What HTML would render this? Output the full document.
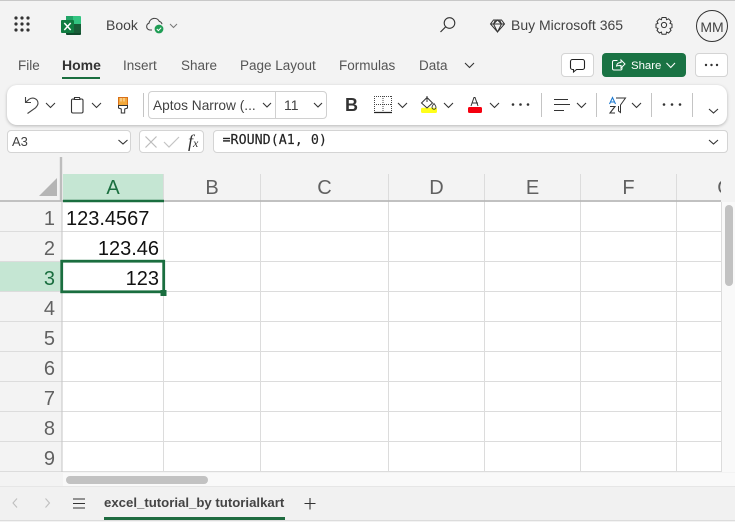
<!DOCTYPE html>
<html><head><meta charset="utf-8"><style>
html,body{margin:0;padding:0}
body{width:735px;height:522px;overflow:hidden;background:#f3f3f3;position:relative;font-family:"Liberation Sans",sans-serif;color:#424242}
div,span.t{position:absolute;box-sizing:border-box}
.t{white-space:nowrap;font-size:14px;line-height:18px}
.tab{font-size:13.5px;color:#555;top:57px}
.hd{top:174px;height:27px;font-size:20px;line-height:28px;text-align:center;color:#616161}
.rh{left:0;width:60px;height:30px;font-size:20px;line-height:34px;text-align:right;padding-right:5px;color:#616161}
.c{font-size:20px;line-height:34px;color:#111;height:30px}
.box{background:#fff;border:1px solid #d4d4d4;border-radius:4px}
svg{position:absolute;left:0;top:0}
</style></head><body>
<div style="left:0;top:0;width:735px;height:1px;background:#c8c8c8"></div>

<span class="t" style="left:106px;top:16px">Book</span>
<span class="t" style="left:511px;top:16px">Buy Microsoft 365</span>
<span class="t tab" style="left:18px">File</span>
<span class="t" style="left:62px;top:56px;font-weight:bold;color:#333">Home</span>
<span class="t tab" style="left:123px">Insert</span>
<span class="t tab" style="left:181px">Share</span>
<span class="t tab" style="left:240px">Page Layout</span>
<span class="t tab" style="left:339px">Formulas</span>
<span class="t tab" style="left:419px">Data</span>
<div style="left:62px;top:77px;width:38px;height:2px;background:#1a6e3f"></div>
<div style="left:696px;top:10px;width:32px;height:32px;border:1px solid #333;border-radius:50%;font-size:14px;line-height:32px;text-align:center;color:#444">MM</div>

<div class="box" style="left:561px;top:53px;width:33px;height:24px"></div>
<div style="left:602px;top:53px;width:84px;height:24px;background:#1a7344;border-radius:4px"></div>
<span class="t" style="left:631px;top:57px;font-size:11.4px;line-height:18px;color:#fff">Share</span>
<div class="box" style="left:695px;top:53px;width:33px;height:24px"></div>

<div style="left:7px;top:85px;width:720px;height:40px;background:#fff;border-radius:10px;box-shadow:0 1px 3px rgba(0,0,0,.25)"></div>
<div style="left:148px;top:91px;width:179px;height:28px;background:#fff;border:1px solid #d0d0d0;border-radius:4px"></div>
<div style="left:275px;top:92px;width:1px;height:26px;background:#d0d0d0"></div>
<span class="t" style="left:153px;top:97px;font-size:13.7px">Aptos Narrow (...</span>
<span class="t" style="left:284px;top:96px;font-size:14px">11</span>
<span class="t" style="left:345px;top:95px;font-size:18px;line-height:21px;font-weight:bold;color:#333">B</span>

<div class="box" style="left:7px;top:130px;width:124px;height:23px"></div>
<span class="t" style="left:12px;top:133px;font-size:13px">A3</span>
<div class="box" style="left:139px;top:130px;width:65px;height:23px"></div>
<div class="box" style="left:213px;top:130px;width:515px;height:23px"></div>
<span class="t" style="left:222.5px;top:132px;font-family:'DejaVu Sans Mono',monospace;font-size:13.35px;color:#222;-webkit-text-stroke:.15px #222">=ROUND(A1, 0)</span>
<span class="t" style="left:188px;top:132px;font-family:'Liberation Serif',serif;font-style:italic;font-size:18px;color:#333">f<span style="font-size:12px">x</span></span>

<!-- Grid -->
<div style="left:62px;top:202px;width:660px;height:270px;background:#fff"></div>
<div style="left:63px;top:174px;width:100px;height:26px;background:#c5e6d3"></div>
<div style="left:0;top:262px;width:60px;height:29px;background:#c5e6d3"></div>
<div class="hd" style="left:63px;width:100px;color:#1a6e3f">A</div>
<div class="hd" style="left:164px;width:96px">B</div>
<div class="hd" style="left:261px;width:127px">C</div>
<div class="hd" style="left:389px;width:95px">D</div>
<div class="hd" style="left:485px;width:95px">E</div>
<div class="hd" style="left:581px;width:95px">F</div>
<div style="left:677px;top:174px;width:44px;height:27px;overflow:hidden"><div class="hd" style="left:0;top:0;width:96px">G</div></div>
<div class="rh" style="top:202px">1</div>
<div class="rh" style="top:232px">2</div>
<div class="rh" style="top:262px;color:#1a6e3f">3</div>
<div class="rh" style="top:292px">4</div>
<div class="rh" style="top:322px">5</div>
<div class="rh" style="top:352px">6</div>
<div class="rh" style="top:382px">7</div>
<div class="rh" style="top:412px">8</div>
<div class="rh" style="top:442px">9</div>

<svg width="735" height="522" viewBox="0 0 735 522" fill="none">
 <!-- grid lines -->
 <g stroke="#dcdcdc" stroke-width="1">
  <path d="M0 231.5H721M0 261.5H721M0 291.5H721M0 321.5H721M0 351.5H721M0 381.5H721M0 411.5H721M0 441.5H721M0 471.5H721"/>
  <path d="M163.5 174V472M260.5 174V472M388.5 174V472M484.5 174V472M580.5 174V472M676.5 174V472"/>
  <path d="M721.5 202V472"/>
 </g>
 <path d="M0 201H721" stroke="#b4b4b4" stroke-width="2" opacity=".8"/>
 <path d="M61 157V201" stroke="#bdbdbd" stroke-width="2.4"/>
 <path d="M62 201V472" stroke="#c4c4c4" stroke-width="1"/>
 <path d="M63 201H164" stroke="#1a6e3f" stroke-width="2.4"/>
 <path d="M57 178V196H39Z" fill="#b5b5b5"/>
 <rect x="61.7" y="261.2" width="102" height="30.6" stroke="#1a6e3f" stroke-width="2.8"/>
 <rect x="160.5" y="290" width="6" height="6" fill="#1a6e3f"/>
 <rect x="722" y="202" width="13" height="270" fill="#f9f9f9"/>
 <rect x="725" y="205" width="8" height="81" rx="4" fill="#c2c2c2"/>
 <rect x="63" y="473" width="672" height="13" fill="#f9f9f9"/>
 <rect x="66" y="476" width="142" height="8" rx="4" fill="#c2c2c2"/>
 <rect x="0" y="486.5" width="735" height="34" fill="#f1f1f1"/>
 <path d="M0 486.5H735" stroke="#e6e6e6"/>
 <path d="M0 520.5H735" stroke="#dcdcdc"/>

 <!-- waffle -->
 <g fill="#333"><circle cx="16" cy="18" r="1.6"/><circle cx="22" cy="18" r="1.6"/><circle cx="28" cy="18" r="1.6"/><circle cx="16" cy="24" r="1.6"/><circle cx="22" cy="24" r="1.6"/><circle cx="28" cy="24" r="1.6"/><circle cx="16" cy="30" r="1.6"/><circle cx="22" cy="30" r="1.6"/><circle cx="28" cy="30" r="1.6"/></g>
 <!-- excel -->
 <path d="M66 16h7v8h-7z" fill="#21a366"/>
 <path d="M73 16h7a1 1 0 0 1 1 1v7h-8z" fill="#33c481"/>
 <path d="M66 24h7v9h-7z" fill="#107c41"/><path d="M73 24h8v9h-8z" fill="#185c37"/>
 <path d="M66 33h15v1a1 1 0 0 1-1 1H67a1 1 0 0 1-1-1z" fill="#0f4a2c"/>
 <rect x="61" y="20" width="13" height="13" rx="1" fill="#107c41"/>
 <path d="M64.3 23l6.4 7M70.7 23l-6.4 7" stroke="#fff" stroke-width="1.5"/>
 <!-- cloud -->
 <path d="M152 30h-2a3.5 3.5 0 0 1-1-6.8 5.5 5.5 0 0 1 10.4-1.700 3.500 3.500 0 0 1 2.600 2.700" stroke="#444" stroke-width="1.1"/>
 <circle cx="159" cy="29" r="4.4" fill="#1f9d55"/><path d="M156.8 29l1.6 1.6 2.8-2.9" stroke="#fff" stroke-width="1"/>
 <path d="M170 24l3.5 3.500 3.500-3.500" stroke="#777" stroke-width="1"/>
 <!-- search -->
 <circle cx="449.5" cy="23" r="5.3" stroke="#333" stroke-width="1.1"/><path d="M445.5 27l-5 5" stroke="#333" stroke-width="1.2"/>
 <!-- diamond -->
 <path d="M493.5 20h8l3 4-7 8-7-8zM490.5 24h14M493.5 24l4 8 4-8M495.5 20l-2 4 4-4 4 4-2-4" stroke="#333" stroke-width="1"/>
 <!-- gear -->
 <circle cx="664" cy="25" r="2.6" stroke="#333"/>
 <path d="M662 17.5h4l.6 2.200 2-.9 2.400 2.600-1 2 2 .7v3.600l-2 .7 1 2-2.400 2.600-2-.9-.6 2.200h-4l-.6-2.200-2 .9-2.400-2.600 1-2-2-.7v-3.600l2-.7-1-2 2.400-2.600 2 .9z" stroke="#333"/>
 <!-- tabs chevron -->
 <path d="M465 63l4.500 4.500 4.500-4.500" stroke="#333" stroke-width="1.1"/>
 <!-- comment -->
 <path d="M572.5 59.5h10a2 2 0 0 1 2 2v6a2 2 0 0 1-2 2h-6l-3 2.500v-2.500h-1a2 2 0 0 1-2-2v-6a2 2 0 0 1 2-2z" stroke="#222" stroke-width="1.1"/>
 <!-- share -->
 <g transform="translate(-2.5 0)">
 <path d="M620 60.5h-3.500a1.500 1.500 0 0 0-1.500 1.500v6.500a1.500 1.500 0 0 0 1.500 1.500h6.500a1.500 1.500 0 0 0 1.500-1.500V67" stroke="#fff"/>
 <path d="M619 66c.3-2.500 2-3.500 4.500-3.500V60l4 4-4 4v-2.500c-2 0-3.300 0-4.500.5z" stroke="#fff"/>
 </g>
 <path d="M666.5 63l4.250 4.500 4.250-4.500" stroke="#fff" stroke-width="1.1"/>
 <!-- dots -->
 <g fill="#333"><circle cx="706" cy="65" r="1.2"/><circle cx="711.5" cy="65" r="1.2"/><circle cx="717" cy="65" r="1.2"/></g>
 <!-- undo -->
 <path d="M25.5 97v5.500H31M25.500 102.500L29 99.300C33 96.500 38 99 38 103.300 38 105.300 37 106.300 35.500 107.800L27.500 113.500" stroke="#444" stroke-width="1.1"/>
 <path d="M46 103l4.500 4.500 4.500-4.500M92 103l4.500 4.500 4.500-4.500" stroke="#333" stroke-width="1"/>
 <!-- clipboard -->
 <path d="M74.5 97.500h5l.5 1.500h1.500a1.500 1.500 0 0 1 1.500 1.500v11a1.500 1.500 0 0 1-1.500 1.500h-8.500a1.500 1.500 0 0 1-1.500-1.500v-11a1.500 1.500 0 0 1 1.500-1.500h1.500zM73.500 99.500h7" stroke="#333" stroke-width="1.1"/>
 <!-- painter -->
 <rect x="118.5" y="97.5" width="9" height="8" fill="#f3a93b" stroke="#d8701a"/>
 <path d="M118.5 105.500v2.500l2.800 1v4h3.400v-4l2.800-1v-2.500z" stroke="#333" stroke-width="1" fill="#fff"/>
 <path d="M121 98v3.500M124 98v3.500" stroke="#fff" stroke-width=".7"/>
 <path d="M143.5 93v24" stroke="#c4c4c4" stroke-width="1"/>
 <path d="M263 103l4 4 4-4M314 103l4 4 4-4" stroke="#333" stroke-width="1.1"/>
 <!-- borders -->
 <path d="M374 96.5h18M391.500 96v16M374.500 96v16M374 104.500h18M383 96v16" stroke="#444" stroke-dasharray="1 1" shape-rendering="crispEdges"/>
 <path d="M374 112.5h18" stroke="#222" stroke-width="1.2"/>
 <path d="M398 103l4.500 4.500 4.500-4.500" stroke="#333" stroke-width="1.1"/>
 <!-- fill -->
 <rect x="421" y="107.7" width="16" height="5.3" rx="1.5" fill="#ffff1a"/>
 <path d="M427 97.500l-5.500 5.500 5.500 5 5.500-5zM427 102v-6" stroke="#333" stroke-width="1"/>
 <path d="M434 103.500c1.500 2 2 2.900 2 3.800a2 2 0 0 1-4 0c0-.9.500-1.800 2-3.800z" stroke="#333" stroke-width=".9"/>
 <path d="M444 103l4.500 4.500 4.500-4.500" stroke="#333" stroke-width="1.1"/>
 <!-- font color -->
 <path d="M471 106l3-8.500h1l3 8.500M472 103h6" stroke="#333" stroke-width="1"/>
 <rect x="468" y="107" width="14" height="6" rx="1.5" fill="#f5000f"/>
 <path d="M490 103l4.500 4.500 4.500-4.500" stroke="#333" stroke-width="1.1"/>
 <g fill="#333"><circle cx="513" cy="104.5" r="1.3"/><circle cx="520.5" cy="104.5" r="1.3"/><circle cx="528" cy="104.5" r="1.3"/></g>
 <path d="M541.5 93v24M596.500 93v24M651.500 93v24M692.500 93v24" stroke="#c4c4c4"/>
 <!-- align -->
 <path d="M554 99.5h14M554 104.500h16M554 110.500h10" stroke="#333" stroke-width="1"/>
 <path d="M577 103l4.500 4.500 4.500-4.500" stroke="#333" stroke-width="1.1"/>
 <!-- sort -->
 <path d="M609.5 104l3-6.500 3 6.500M610.500 102h4" stroke="#1e7ad0" stroke-width="1.1"/>
 <path d="M610 106.5h5l-5 6.500h5" stroke="#333" stroke-width="1.1"/>
 <path d="M616 98h9.500l-5 7v7.500l-2-1.500v-5" stroke="#333" stroke-width="1"/>
 <path d="M632 103l4.500 4.500 4.500-4.500" stroke="#333" stroke-width="1.1"/>
 <g fill="#333"><circle cx="664" cy="104.5" r="1.3"/><circle cx="672" cy="104.5" r="1.3"/><circle cx="680" cy="104.5" r="1.3"/></g>
 <path d="M709 109l4.500 4 4.500-4" stroke="#333" stroke-width="1.1"/>
 <!-- name box & formula -->
 <path d="M118.5 140l4.500 4 4.500-4M709 140l4.500 4 4.500-4" stroke="#333" stroke-width="1.1"/>
 <path d="M145.5 136.500l11 11M156.500 136.500l-11 11" stroke="#bcbcbc" stroke-width="1.2"/>
 <path d="M164 142l5 5 10-10" stroke="#c4c4c4" stroke-width="1.2"/>
 <!-- sheet bar -->
 <path d="M17 498.5l-4 4.500 4 4.500M45.500 498.500l4 4.500-4 4.500" stroke="#bfbfbf" stroke-width="1.1"/>
 <path d="M73 499h12M73 503.500h12M73 508h12" stroke="#333" stroke-width="1.1"/>
 <path d="M310 498v11.500M304.500 503.500h11" stroke="#333" stroke-width="1.1"/>
 <rect x="104" y="517" width="181" height="3" fill="#1f6b40"/>
</svg>

<span class="c t" style="left:66px;top:202px;font-size:20px;line-height:34px">123.4567</span>
<div class="c" style="left:63px;top:232px;width:96px;text-align:right">123.46</div>
<div class="c" style="left:63px;top:262px;width:96px;text-align:right">123</div>
<span class="t" style="left:104px;top:494px;font-weight:bold;font-size:13.2px;color:#444">excel_tutorial_by tutorialkart</span>
</body></html>
